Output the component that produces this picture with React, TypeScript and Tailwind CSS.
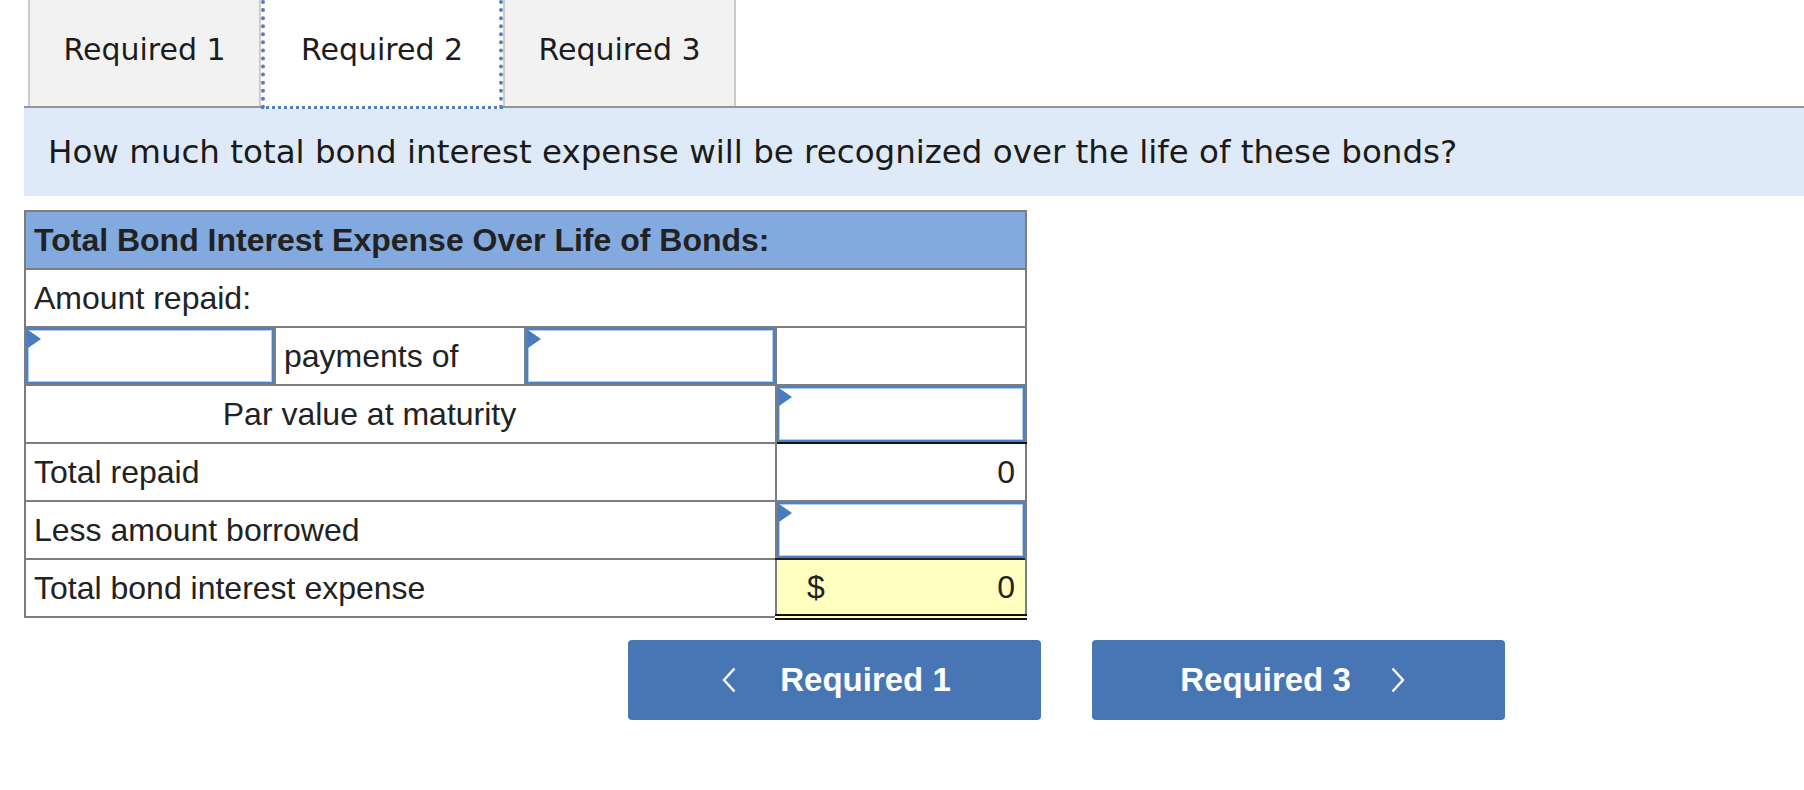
const verdana = "font-['Verdana','DejaVu_Sans',sans-serif]"
const arial = "font-['Arial','Liberation_Sans',sans-serif]"

function Tab({ label, active }: { label: string; active?: boolean }) {
  if (active) {
    return (
      <div className="relative z-10 w-[242px] h-[109px] -mb-[3px] bg-white border-x-[4px] border-b-[3px] border-dotted border-[#4f7fc0] flex justify-center pt-[32px]">
        <span className={`${verdana} text-[30px] leading-[36px] text-[#1c1c1c]`}>{label}</span>
      </div>
    )
  }
  return (
    <div className="w-[233px] h-[106px] bg-[#f2f2f2] border-x-2 border-[#cdcdcd] flex justify-center pt-[32px]">
      <span className={`${verdana} text-[30px] leading-[36px] text-[#1c1c1c]`}>{label}</span>
    </div>
  )
}

function Marker() {
  return (
    <svg className="absolute left-0 top-0" width="13" height="18" viewBox="0 0 13 18">
      <polygon points="0,0 13,9 0,18" fill="#4a7bbd" />
    </svg>
  )
}

function InputBox() {
  return (
    <div className="relative w-full h-full border-2 border-[#4f80c2] shadow-[inset_0_0_0_1px_#b7cde9] bg-white">
      <Marker />
    </div>
  )
}

function Chevron({ dir }: { dir: 'left' | 'right' }) {
  return (
    <svg width="14" height="26" viewBox="0 0 14 26" fill="none">
      <polyline
        points={dir === 'left' ? '12.5,1.5 2,13 12.5,24.5' : '1.5,1.5 12,13 1.5,24.5'}
        stroke="white"
        strokeWidth="2.4"
      />
    </svg>
  )
}

const cell = 'border-2 border-[#7d7d7d] h-[58px] p-0 align-middle'

export default function App() {
  return (
    <div className="w-[1804px] h-[790px] bg-white overflow-hidden text-[#1f1f1f]">
      <div className="pl-[24px]">
        <div className="flex h-[106px] pl-[4px]">
          <Tab label="Required 1" />
          <Tab label="Required 2" active />
          <Tab label="Required 3" />
        </div>
        <div className="h-[2px] bg-[#959595]" />
        <div className={`h-[88px] bg-[#deeaf7] flex items-center pl-[24px] ${verdana} text-[32.5px] text-[#1a1a1a]`}>
          How much total bond interest expense will be recognized over the life of these bonds?
        </div>
      </div>

      <div className="pl-[24px] pt-[14px]">
        <table className={`w-[1001px] table-fixed border-collapse ${arial} text-[32px] leading-[36px] text-[#222]`}>
          <colgroup>
            <col className="w-[250px]" />
            <col className="w-[250px]" />
            <col className="w-[251px]" />
            <col className="w-[250px]" />
          </colgroup>
          <tbody>
            <tr>
              <td colSpan={4} className={`${cell} bg-[#82aadf] pl-[8px] font-bold`}>
                Total Bond Interest Expense Over Life of Bonds:
              </td>
            </tr>
            <tr>
              <td colSpan={4} className={`${cell} pl-[8px]`}>Amount repaid:</td>
            </tr>
            <tr>
              <td className={cell}><InputBox /></td>
              <td className={`${cell} pl-[8px]`}>payments of</td>
              <td className={cell}><InputBox /></td>
              <td className={cell}></td>
            </tr>
            <tr>
              <td colSpan={3} className={`${cell} text-center pr-[62px]`}>Par value at maturity</td>
              <td className={`${cell} border-b-[#111]`}><InputBox /></td>
            </tr>
            <tr>
              <td colSpan={3} className={`${cell} pl-[8px]`}>Total repaid</td>
              <td className={`${cell} border-t-[#111] text-right pr-[10px]`}>0</td>
            </tr>
            <tr>
              <td colSpan={3} className={`${cell} pl-[8px]`}>Less amount borrowed</td>
              <td className={`${cell} border-b-[#222]`}><InputBox /></td>
            </tr>
            <tr>
              <td colSpan={3} className={`${cell} pl-[8px]`}>Total bond interest expense</td>
              <td className={`${cell} border-t-[#222] border-b-[6px] border-b-[#111] border-double bg-[#ffffbf]`}>
                <div className="flex justify-between pl-[30px] pr-[10px]">
                  <span>$</span>
                  <span>0</span>
                </div>
              </td>
            </tr>
          </tbody>
        </table>
      </div>

      <div className={`flex gap-[51px] pl-[628px] pt-[20px] ${arial}`}>
        <button className="w-[413px] h-[80px] rounded-[4px] bg-[#4876b4] flex items-center justify-center gap-[44px] text-white text-[33px] font-bold pl-[4px]">
          <Chevron dir="left" />
          <span>Required 1</span>
        </button>
        <button className="w-[413px] h-[80px] rounded-[4px] bg-[#4876b4] flex items-center justify-center gap-[40px] text-white text-[33px] font-bold pr-[12px]">
          <span>Required 3</span>
          <Chevron dir="right" />
        </button>
      </div>
    </div>
  )
}
